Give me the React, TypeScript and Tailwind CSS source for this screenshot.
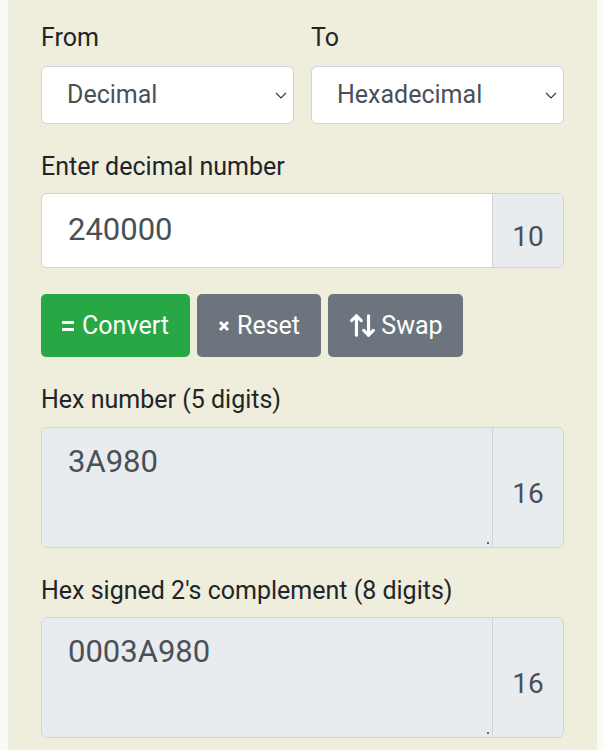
import { ArrowUpDown } from "lucide-react";

const Chevron = () => (
  <svg
    width="12"
    height="7"
    viewBox="0 0 12 7"
    className="pointer-events-none absolute right-[7px] top-[26px]"
  >
    <path d="M1 1l5 5 5-5" fill="none" stroke="#343a40" strokeWidth="1.2" />
  </svg>
);

const Label = ({ children }: { children: React.ReactNode }) => (
  <div className="text-[25px] leading-[36px] text-[#212529]">{children}</div>
);

const Select = ({ value }: { value: string }) => (
  <div className="relative">
    <select
      defaultValue={value}
      className="h-[58px] w-full appearance-none rounded-[6px] border border-[#ced4da] bg-white pl-[25px] text-[25px] text-[#495057] outline-none"
    >
      <option>Decimal</option>
      <option>Hexadecimal</option>
      <option>Binary</option>
      <option>Octal</option>
    </select>
    <Chevron />
  </div>
);

// readonly output box with base addon
const Output = ({ value, base }: { value: string; base: string }) => (
  <div className="flex h-[121px] overflow-hidden rounded-[6px] border border-[#ced4da] bg-[#e9ecef]">
    <div className="relative flex-1">
      <textarea
        readOnly
        value={value}
        className="h-full w-full resize-none bg-[#e9ecef] pl-[26px] pt-[11px] text-[31px] leading-[46px] text-[#495057] outline-none"
      />
      <span className="absolute bottom-[3px] right-[3px] h-[2px] w-[2px] rounded-full bg-[#343a40]" />
    </div>
    <div className="flex w-[71px] items-center justify-center border-l border-[#ced4da] pt-[12px] text-[28px] text-[#495057]">
      {base}
    </div>
  </div>
);

export default function App() {
  return (
    <div className="min-h-screen bg-[#fafaf6] pl-[8px] pr-[7px] font-[Roboto,sans-serif]">
      <div className="bg-[#efeddc] px-[33px] pb-[40px] pt-[20px]">
        <div className="grid grid-cols-2 gap-[17px]">
          <div>
            <div className="mb-[10px]">
              <Label>From</Label>
            </div>
            <Select value="Decimal" />
          </div>
          <div>
            <div className="mb-[10px]">
              <Label>To</Label>
            </div>
            <Select value="Hexadecimal" />
          </div>
        </div>

        <div className="mb-[8px] mt-[25px]">
          <Label>Enter decimal number</Label>
        </div>
        <div className="flex h-[75px] overflow-hidden rounded-[6px] border border-[#ced4da]">
          <input
            type="text"
            defaultValue="240000"
            className="min-w-0 flex-1 bg-white pl-[26px] text-[31px] text-[#495057] outline-none"
          />
          <div className="flex w-[71px] items-center justify-center border-l border-[#ced4da] bg-[#e9ecef] pt-[12px] text-[28px] text-[#495057]">
            10
          </div>
        </div>

        {/* buttons */}
        <div className="mt-[26px] flex gap-[7px]">
          <button className="flex h-[63px] w-[149px] items-center justify-center gap-[8px] rounded-[5px] bg-[#28a745] text-[25px] text-white">
            <span className="flex flex-col gap-[4px]">
              <span className="block h-[3px] w-[12px] bg-white" />
              <span className="block h-[3px] w-[12px] bg-white" />
            </span>
            Convert
          </button>
          <button className="flex h-[63px] w-[124px] items-center justify-center gap-[7px] rounded-[5px] bg-[#6c757d] text-[25px] text-white">
            <svg width="12" height="12" viewBox="0 0 12 12">
              <path d="M2 2l8 8M10 2l-8 8" stroke="white" strokeWidth="3" />
            </svg>
            Reset
          </button>
          <button className="flex h-[63px] w-[135px] items-center justify-center gap-[4px] rounded-[5px] bg-[#6c757d] text-[25px] text-white">
            <ArrowUpDown size={29} strokeWidth={2.6} />
            Swap
          </button>
        </div>

        <div className="mb-[9px] mt-[25px]">
          <Label>Hex number (5 digits)</Label>
        </div>
        <Output value="3A980" base="16" />

        <div className="mb-[8px] mt-[25px]">
          <Label>Hex signed 2's complement (8 digits)</Label>
        </div>
        <Output value="0003A980" base="16" />
      </div>
    </div>
  );
}
